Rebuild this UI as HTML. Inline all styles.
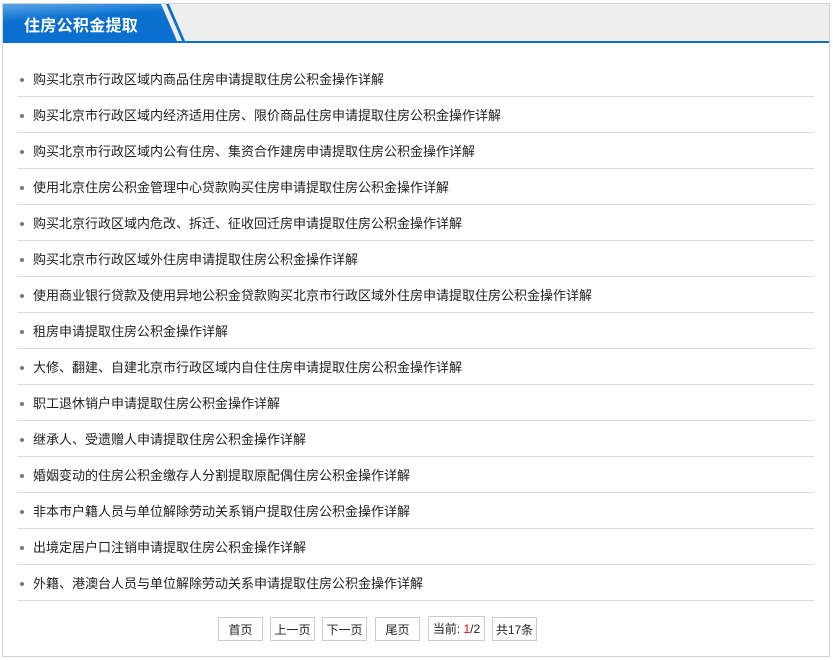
<!DOCTYPE html><html><head><meta charset="utf-8"><style>
body{margin:0;background:#fff;font-family:"Liberation Sans","Noto Sans CJK SC",sans-serif;}
.box{position:absolute;left:2px;top:3px;width:826px;height:652px;border:1px solid #d2d2d2;border-top:1px solid #d6d6d6;}
.hd{position:absolute;left:0;top:0;width:826px;height:37px;background:#eeeeee;border-bottom:2px solid #0a6fcf;}
.hd svg{position:absolute;left:0;top:0}
.title{position:absolute;left:21px;top:8px;color:#fff;font-size:16px;font-weight:bold;letter-spacing:0.3px}
ul{list-style:none;margin:0;padding:0;position:absolute;left:14px;top:57px;width:797px}
li{height:35px;border-bottom:1px solid #dcdcdc;font-size:13px;color:#222;line-height:37px;padding-left:16px;position:relative;white-space:nowrap}
li:before{content:"";position:absolute;left:3px;top:17px;width:4px;height:4px;border-radius:50%;background:#777}
.pg{position:absolute;top:613px;height:24px;border:1px solid #ccc;font-size:12px;color:#222;text-align:center;line-height:24px;box-sizing:border-box}
</style></head><body>
<div class="box">
<div class="hd"><svg width="200" height="37"><defs><linearGradient id="g" x1="0" y1="0" x2="0.3" y2="1"><stop offset="0" stop-color="#5aa6e6"/><stop offset="0.45" stop-color="#0a6fcf"/></linearGradient></defs><polygon points="0,0 158,0 174,37 0,37" fill="url(#g)"/><polygon points="163,0 166,0 182,37 179,37" fill="#0a6fcf"/></svg><div class="title">住房公积金提取</div></div>
<ul>
<li>购买北京市行政区域内商品住房申请提取住房公积金操作详解</li>
<li>购买北京市行政区域内经济适用住房、限价商品住房申请提取住房公积金操作详解</li>
<li>购买北京市行政区域内公有住房、集资合作建房申请提取住房公积金操作详解</li>
<li>使用北京住房公积金管理中心贷款购买住房申请提取住房公积金操作详解</li>
<li>购买北京行政区域内危改、拆迁、征收回迁房申请提取住房公积金操作详解</li>
<li>购买北京市行政区域外住房申请提取住房公积金操作详解</li>
<li>使用商业银行贷款及使用异地公积金贷款购买北京市行政区域外住房申请提取住房公积金操作详解</li>
<li>租房申请提取住房公积金操作详解</li>
<li>大修、翻建、自建北京市行政区域内自住住房申请提取住房公积金操作详解</li>
<li>职工退休销户申请提取住房公积金操作详解</li>
<li>继承人、受遗赠人申请提取住房公积金操作详解</li>
<li>婚姻变动的住房公积金缴存人分割提取原配偶住房公积金操作详解</li>
<li>非本市户籍人员与单位解除劳动关系销户提取住房公积金操作详解</li>
<li>出境定居户口注销申请提取住房公积金操作详解</li>
<li>外籍、港澳台人员与单位解除劳动关系申请提取住房公积金操作详解</li>
</ul>
<div class="pg" style="left:215px;width:45px">首页</div>
<div class="pg" style="left:267px;width:45px">上一页</div>
<div class="pg" style="left:319px;width:45px">下一页</div>
<div class="pg" style="left:372px;width:45px">尾页</div>
<div class="pg" style="left:425px;width:57px;top:612px;height:25px;line-height:25px">当前: <span style="color:#e00">1</span>/2</div>
<div class="pg" style="left:489px;width:45px">共17条</div>
</div>
</body></html>
